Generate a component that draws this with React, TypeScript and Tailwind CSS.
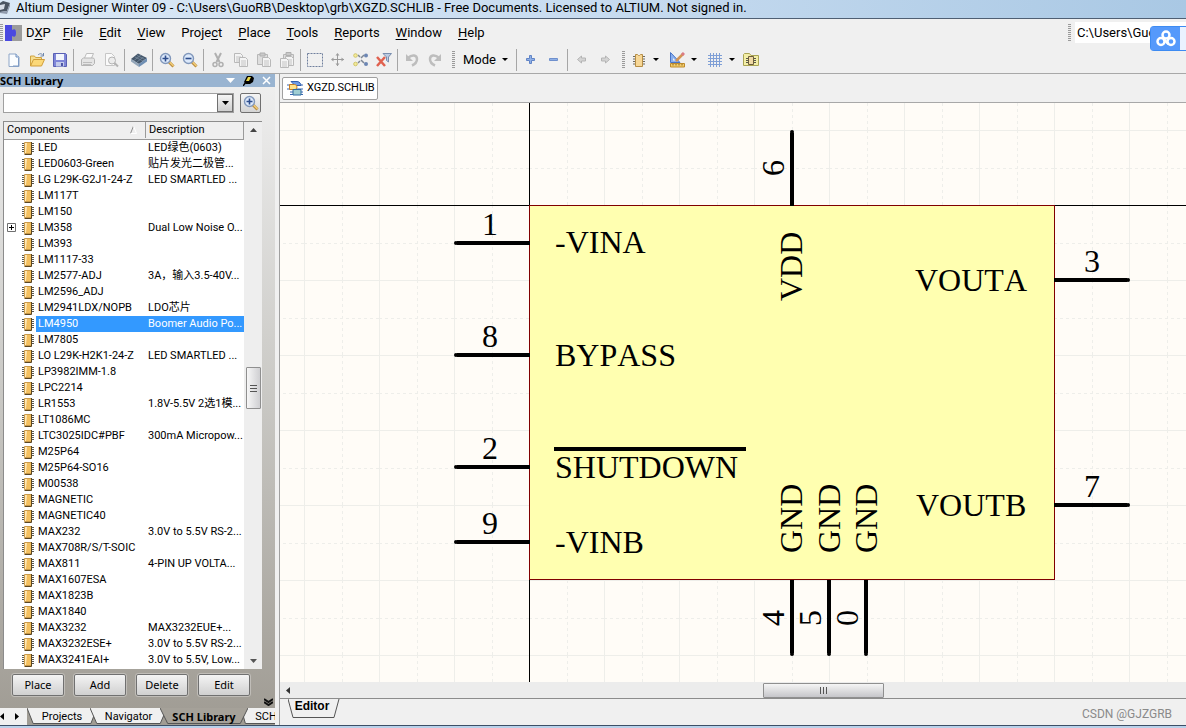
import { Fragment, useState } from 'react';
import type { ReactNode } from 'react';

type Component = { name: string; description?: string; expandable?: boolean };

const COMPONENTS: Component[] = [
  { name: 'LED', description: 'LED绿色(0603)' },
  { name: 'LED0603-Green', description: '贴片发光二极管...' },
  { name: 'LG L29K-G2J1-24-Z', description: 'LED SMARTLED ...' },
  { name: 'LM117T' },
  { name: 'LM150' },
  { name: 'LM358', description: 'Dual Low Noise O...', expandable: true },
  { name: 'LM393' },
  { name: 'LM1117-33' },
  { name: 'LM2577-ADJ', description: '3A，输入3.5-40V...' },
  { name: 'LM2596_ADJ' },
  { name: 'LM2941LDX/NOPB', description: 'LDO芯片' },
  { name: 'LM4950', description: 'Boomer Audio Po...' },
  { name: 'LM7805' },
  { name: 'LO L29K-H2K1-24-Z', description: 'LED SMARTLED ...' },
  { name: 'LP3982IMM-1.8' },
  { name: 'LPC2214' },
  { name: 'LR1553', description: '1.8V-5.5V 2选1模...' },
  { name: 'LT1086MC' },
  { name: 'LTC3025IDC#PBF', description: '300mA Micropow...' },
  { name: 'M25P64' },
  { name: 'M25P64-SO16' },
  { name: 'M00538' },
  { name: 'MAGNETIC' },
  { name: 'MAGNETIC40' },
  { name: 'MAX232', description: '3.0V to 5.5V RS-2...' },
  { name: 'MAX708R/S/T-SOIC' },
  { name: 'MAX811', description: '4-PIN UP VOLTA...' },
  { name: 'MAX1607ESA' },
  { name: 'MAX1823B' },
  { name: 'MAX1840' },
  { name: 'MAX3232', description: 'MAX3232EUE+...' },
  { name: 'MAX3232ESE+', description: '3.0V to 5.5V RS-2...' },
  { name: 'MAX3241EAI+', description: '3.0V to 5.5V, Low...' },
];

// label split around its mnemonic letter
const MENUS = [
  ['D', 'X', 'P'],
  ['', 'F', 'ile'],
  ['', 'E', 'dit'],
  ['', 'V', 'iew'],
  ['Proje', 'c', 't'],
  ['', 'P', 'lace'],
  ['', 'T', 'ools'],
  ['', 'R', 'eports'],
  ['', 'W', 'indow'],
  ['', 'H', 'elp'],
];

function Svg({ children, size = 16 }: { children: ReactNode; size?: number }) {
  return (
    <svg width={size} height={size} viewBox="0 0 16 16" fill="none" aria-hidden="true" className="shrink-0">
      {children}
    </svg>
  );
}

const Magnifier = ({ plus }: { plus?: boolean }) => (
  <Svg>
    <path d="M10 10l4.5 4.5" stroke="#b98a3c" strokeWidth="3" />
    <path d="M10.5 10l4 4" stroke="#f3cf7a" strokeWidth="1.4" />
    <circle cx="6.5" cy="6.5" r="5" fill="#dce9fb" stroke="#8298bb" strokeWidth="1.4" />
    <path d={plus ? 'M3.5 6.5h6M6.5 3.5v6' : 'M3.5 6.5h6'} stroke="#2d4d8c" strokeWidth="1.6" />
  </Svg>
);

const Page = ({ x, y }: { x: number; y: number }) => (
  <g transform={`translate(${x} ${y})`}>
    <path d="M.5.5h6l2 2v7h-8z" fill="#f4f4f4" stroke="#b9b9b9" />
    <path d="M2 4h5M2 6h5M2 8h5" stroke="#c4c4c4" />
  </g>
);

const ICONS: Record<string, ReactNode> = {
  'New': (
    <Svg>
      <path d="M3 2h7l3 3v9.5H3z" fill="#fbfdff" stroke="#8ea6c8" />
      <path d="M10 2v3h3" fill="#dbe6f6" stroke="#6f8fbd" />
      <path d="M12.5 6v8H7" stroke="#7f9cc6" />
    </Svg>
  ),
  'Open': (
    <Svg>
      <path d="M1.5 14V4h4l1 1.500h6v2.500" fill="#f6dd8f" stroke="#d0a441" />
      <path d="M1.500 14l3-6.500h11l-3 6.500z" fill="#fbd878" stroke="#d09d39" />
      <path d="M9 3c2-2 4-1.500 5 .5M14.500 1v3h-3" stroke="#6e87ad" />
    </Svg>
  ),
  'Save': (
    <Svg>
      <path d="M1.500 1.500h12l1 1v12h-13z" fill="#7f86d8" stroke="#5960b4" />
      <path d="M4 2h8v6H4z" fill="#f2f5fc" />
      <path d="M4 10h8v4.500H4z" fill="#c3cbea" />
      <path d="M9 11h2v3H9z" fill="#4c55a5" />
    </Svg>
  ),
  'Print': (
    <Svg>
      <path d="M4.500 6l2-4.500h7L11.500 6" fill="#fafafa" stroke="#bdbdbd" />
      <path d="M1.500 7.500l2-1.500h10l1 1.500v4l-2 2h-11z" fill="#e4e4e4" stroke="#b4b4b4" />
      <path d="M3 10.500h9M3 12.500h8" stroke="#bcbcbc" />
    </Svg>
  ),
  'Print Preview': (
    <Svg>
      <path d="M2.500 1.500h6l3 3v9h-9z" fill="#fafafa" stroke="#c6c6c6" />
      <circle cx="9" cy="8.500" r="3.500" fill="#ececec" stroke="#b4b4b4" />
      <path d="M11.500 11l3.500 3.500" stroke="#b4b4b4" strokeWidth="2" />
    </Svg>
  ),
  'Devices': (
    <Svg>
      <path d="M0 7l7-5.500 9 4.500-8 6z" fill="#44566a" />
      <path d="M0 7l8 5v3L0 9.500z" fill="#93a6b9" />
      <path d="M16 6l-8 6v3l8-5.500z" fill="#6f8fb4" />
      <path d="M4 5l8 4M6 3.500l8 4M3 8.500l7-5.500M6 10l7-5.500" stroke="#75899c" strokeWidth=".8" />
    </Svg>
  ),
  'Zoom In': <Magnifier plus />,
  'Zoom Out': <Magnifier />,
  'Cut': (
    <Svg>
      <path d="M5 1l4.500 9M11 1L6.500 10" stroke="#b0b0b0" strokeWidth="2" />
      <circle cx="5" cy="12.500" r="2" stroke="#b0b0b0" strokeWidth="1.500" />
      <circle cx="11" cy="12.500" r="2" stroke="#b0b0b0" strokeWidth="1.500" />
    </Svg>
  ),
  'Copy': (
    <Svg>
      <Page x={1} y={1} />
      <Page x={6} y={5} />
    </Svg>
  ),
  'Paste': (
    <Svg>
      <path d="M1.500 2.500h10v10h-10z" fill="#dedede" stroke="#b7b7b7" />
      <path d="M4 1h5v3H4z" fill="#c9c9c9" stroke="#b0b0b0" />
      <Page x={6} y={5} />
    </Svg>
  ),
  'Rubber Stamp': (
    <Svg>
      <path d="M4.500 2.500h10v10h-10z" fill="#dedede" stroke="#b7b7b7" />
      <path d="M7 .5h5v3H7z" fill="#c9c9c9" stroke="#b0b0b0" />
      <Page x={6} y={4} />
      <Page x={1} y={6} />
    </Svg>
  ),
  'Select Inside Area': (
    <Svg>
      <path d="M.5 1.500h15v13H.5z" stroke="#6f7f9d" strokeDasharray="2 1" />
    </Svg>
  ),
  'Move Selection': (
    <Svg>
      <path d="M7.500 2v12M2 7.500h12" stroke="#9c9c9c" />
      <path d="M7.500 1L5.500 3.500h4zM7.500 14l-2-2.500h4zM1 7.500l2.500-2v4zM14 7.500l-2.500-2v4z" fill="#9c9c9c" />
    </Svg>
  ),
  'Deselect All': (
    <Svg>
      <path d="M5 3l2 2M8 6l3-3M8 8l3 3M5 11l2-2" stroke="#7d8694" strokeWidth="1.500" />
      <circle cx="2.500" cy="3.500" r="1.800" fill="#f5eb9a" stroke="#d0c66b" />
      <circle cx="2.500" cy="12" r="1.800" fill="#f5eb9a" stroke="#d0c66b" />
      <circle cx="13" cy="3.500" r="2" fill="#6c86b3" />
      <circle cx="13" cy="12" r="2" fill="#6c86b3" />
    </Svg>
  ),
  'Clear Filter': (
    <Svg>
      <path d="M7 1.500h8.500L12.500 5v5l-2-1.500V5z" fill="#bccbe2" stroke="#7a8eaf" />
      <path d="M1 5l8 9M9 5l-8 9" stroke="#e0614f" strokeWidth="2.500" />
    </Svg>
  ),
  'Undo': (
    <Svg>
      <path d="M4 6c4-4 9-3 9 1 0 3-1.500 5-5 6.500" stroke="#bdbdbd" strokeWidth="2.500" />
      <path d="M2 2v7h7z" fill="#bdbdbd" />
    </Svg>
  ),
  'Redo': (
    <Svg>
      <path d="M12 6C8 2 3 3 3 7c0 3 1.500 5 5 6.500" stroke="#bdbdbd" strokeWidth="2.500" />
      <path d="M14 2v7H7z" fill="#bdbdbd" />
    </Svg>
  ),
  'Add Mode': (
    <Svg>
      <path d="M6.500 3.500h2v3h3v2h-3v3h-2v-3h-3v-2h3z" fill="#8fb0e6" stroke="#6184c6" />
    </Svg>
  ),
  'Remove Mode': (
    <Svg>
      <path d="M3.500 6.500h8v2h-8z" fill="#8fb0e6" stroke="#6f90cd" />
    </Svg>
  ),
  'Previous Mode': (
    <Svg>
      <path d="M3.500 7.500l4-3.500v2h4v3h-4v2z" fill="#d4d4d4" stroke="#b4b4b4" />
    </Svg>
  ),
  'Next Mode': (
    <Svg>
      <path d="M12.500 7.500l-4-3.500v2h-4v3h4v2z" fill="#d4d4d4" stroke="#b4b4b4" />
    </Svg>
  ),
  'IEEE Symbols': (
    <Svg>
      <path d="M2 4.500h12M2 7h12M2 9.500h12M2 12h12" stroke="#6d6a60" />
      <path d="M4.500 2.500h2l1 1h1l1-1h2v12h-7z" fill="#f7d796" stroke="#b58d45" />
    </Svg>
  ),
  'Utilities': (
    <Svg>
      <path d="M1.500.5v10H11z" fill="#8ab0ef" stroke="#4974c6" />
      <path d="M4 6v2.500h2.500z" fill="#f0f0f0" />
      <path d="M7 9l7-7" stroke="#d49555" strokeWidth="2.500" />
      <path d="M13 3l2-2" stroke="#db7b85" strokeWidth="3" />
      <path d="M1.500 11.500h14v3.500h-14z" fill="#f4cd6b" stroke="#bd8a2d" />
      <path d="M4 12v1.500M7 12v1.500M10 12v1.500M13 12v1.500" stroke="#8d6820" />
    </Svg>
  ),
  'Grids': (
    <Svg>
      <path d="M1 3.500h14M1 6.500h14M1 9.500h14M1 12.500h14M3.500 1v14M6.500 1v14M9.500 1v14M12.500 1v14" stroke="#7f9fd6" />
    </Svg>
  ),
  'Model Manager': (
    <Svg>
      <path d="M.5 13.500v-11l1-1h5l1.500 2h7.500v10z" fill="#f3eea6" stroke="#aaa455" />
      <path d="M3 6.500h10M3 8.500h10M3 10.500h10" stroke="#59574d" />
      <path d="M5.500 4.500h5v8h-5z" fill="#f0d9a4" stroke="#6c5e39" />
    </Svg>
  ),
};

const Separator = () => <span className="mx-0.5 h-[22px] w-px shrink-0 bg-[#a6a6a6]" />;

const Grip = () => (
  <span className="h-[18px] w-[3px] shrink-0 bg-[repeating-linear-gradient(to_bottom,#9a9a9a_0_1px,#efefef_1px_2px)]" />
);

const Caret = () => (
  <svg width="6" height="3" viewBox="0 0 6 3" aria-hidden="true">
    <path d="M0 0h6L3 3z" fill="#000" />
  </svg>
);

function IconButton({ name }: { name: string }) {
  return (
    <button type="button" aria-label={name} className="flex h-[22px] w-[23px] shrink-0 items-center justify-center">
      {ICONS[name]}
    </button>
  );
}

const TOOL_GROUPS = [
  ['New', 'Open', 'Save'],
  ['Print', 'Print Preview'],
  ['Devices'],
  ['Zoom In', 'Zoom Out'],
  ['Cut', 'Copy', 'Paste', 'Rubber Stamp'],
  ['Select Inside Area', 'Move Selection', 'Deselect All', 'Clear Filter'],
  ['Undo', 'Redo'],
];

function Toolbar() {
  return (
    <div className="flex h-[27px] shrink-0 items-center overflow-hidden pl-0.5">
      {TOOL_GROUPS.map((group, i) => (
        <Fragment key={group[0]}>
          {i > 0 && <Separator />}
          {group.map((name) => (
            <IconButton key={name} name={name} />
          ))}
        </Fragment>
      ))}
      <div className="flex items-center pl-1.5">
        <Grip />
        <button type="button" className="flex items-center gap-1.5 pr-1.5 pl-2 text-[13px]">
          Mode
          <Caret />
        </button>
        <Separator />
        <IconButton name="Add Mode" />
        <IconButton name="Remove Mode" />
        <Separator />
        <IconButton name="Previous Mode" />
        <IconButton name="Next Mode" />
      </div>
      <div className="flex items-center pl-1.5">
        <Grip />
        {['IEEE Symbols', 'Utilities', 'Grids'].map((name) => (
          <div key={name} className="flex w-[38px] items-center gap-[3px] pl-0.5">
            <IconButton name={name} />
            <Caret />
          </div>
        ))}
        <IconButton name="Model Manager" />
      </div>
    </div>
  );
}

function MenuBar() {
  return (
    <div className="flex h-[27px] shrink-0 items-center text-[13px]">
      <Grip />
      <svg width="17" height="16" viewBox="0 0 17 16" className="ml-0.5 shrink-0" aria-hidden="true">
        <path d="M0 0h17v16H0z" fill="#9b9b9b" />
        <path d="M0 0h7v5c3-2 4 0 4 3s-1 5-4 3v5H0z" fill="#4a49e0" />
      </svg>
      <nav className="flex gap-4 pl-1">
        {MENUS.map(([before, key, after]) => (
          <button key={before + key + after} type="button" className="first:-mr-1">
            {before}
            <span className="underline underline-offset-2">{key}</span>
            {after}
          </button>
        ))}
      </nav>
      <div className="ml-auto flex items-center gap-1">
        <Grip />
        <div className="relative w-[111px]">
          <input
            aria-label="Location"
            defaultValue="C:\Users\GuoRB\Desktop\grb"
            className="block h-[21px] w-full bg-white pl-0.5 text-[13px] outline-none"
          />
          <button
            type="button"
            aria-label="Upload"
            className="absolute top-1 right-0 flex h-[25px] w-9 items-center rounded-l-[4px] border border-r-0 border-[#3d8bf2] bg-[#eaf2ff]"
          >
            <span className="flex h-full w-[29px] items-center justify-center bg-[#5599fb]">
              <svg width="20" height="17" viewBox="0 0 20 17" fill="none" stroke="#fff" strokeWidth="2.500" aria-hidden="true">
                <circle cx="10" cy="5" r="3.500" />
                <circle cx="5" cy="11.500" r="3.500" />
                <circle cx="15" cy="11.500" r="3.500" />
                <path d="M7.500 9l5 5" />
              </svg>
            </span>
          </button>
        </div>
      </div>
    </div>
  );
}

const ChipIcon = () => (
  <svg width="12" height="14" viewBox="0 0 12 14" className="block" aria-hidden="true">
    <path d="M0 2.500h12M0 4.500h12M0 6.500h12M0 8.500h12M0 10.500h12" stroke="#5c5a52" />
    <path d="M2.500 1.500h7v11h-7z" fill="#ffe9b8" stroke="#c99a4a" />
    <path d="M5 2h4v10H4z" fill="#f3bf5e" />
    <path d="M9.500 1v12.500h-7" stroke="#5c4620" fill="none" />
  </svg>
);

function ComponentList() {
  const [selected, setSelected] = useState('LM4950');

  return (
    <div className="mt-2 mr-[13px] ml-[3px] flex min-h-0 flex-1 overflow-hidden border-t border-l border-[#8c8c8c] bg-white">
      <table className="w-full table-fixed border-collapse self-start text-[11px] leading-4 whitespace-nowrap">
        <thead>
          <tr className="h-[17px] border-r border-b border-[#9a9a9a] bg-[#efefef] text-left">
            <th className="w-[142px] p-0 pl-[3px] font-normal">
              <span className="flex items-center justify-between border-r border-[#9a9a9a] pr-2">
                Components
                <svg width="7" height="8" viewBox="0 0 7 8" aria-hidden="true">
                  <path d="M.5 7.500L3.500 0" stroke="#8c8c8c" />
                  <path d="M3.500 0l3 7.500h-6" stroke="#fff" fill="none" />
                </svg>
              </span>
            </th>
            <th className="p-0 pl-[3px] font-normal">Description</th>
          </tr>
        </thead>
        <tbody>
          {COMPONENTS.map((c) => (
            <tr key={c.name} onClick={() => setSelected(c.name)} className="h-4">
              <td className="p-0">
                <div className="flex h-4 items-center">
                  <span className="flex w-[18px] pl-[3px]">
                    {c.expandable && (
                      <button type="button" aria-label={`Expand ${c.name}`}>
                        <svg width="9" height="9" viewBox="0 0 9 9" className="block" aria-hidden="true">
                          <path d="M.5.5h8v8h-8z" fill="#fff" stroke="#6f6f6f" />
                          <path d="M2 4.500h5M4.500 2v5" stroke="#000" />
                        </svg>
                      </button>
                    )}
                  </span>
                  <ChipIcon />
                  <span
                    className={
                      c.name === selected
                        ? 'ml-0.5 h-4 flex-1 bg-[#3399ff] pl-0.5 text-white'
                        : 'ml-0.5 h-4 flex-1 pl-0.5'
                    }
                  >
                    {c.name}
                  </span>
                </div>
              </td>
              <td className={c.name === selected ? 'bg-[#3399ff] p-0 pl-0.5 text-white' : 'p-0 pl-0.5'}>
                <div className="h-4">{c.description}</div>
              </td>
            </tr>
          ))}
        </tbody>
      </table>
      <div className="flex w-[18px] shrink-0 flex-col items-center bg-[#eeeeee] py-1.5">
        <svg width="7" height="4" viewBox="0 0 7 4" aria-hidden="true">
          <path d="M0 4h7L3.500 0z" fill="#444" />
        </svg>
        <div className="grow-[48]" />
        <div className="flex h-[42px] w-[15px] flex-col items-center justify-center gap-0.5 rounded-[1px] border border-[#8f8f8f] bg-linear-to-r from-[#f7f7f7] to-[#cfcfd2]">
          <span className="h-px w-[7px] bg-[#555]" />
          <span className="h-px w-[7px] bg-[#555]" />
          <span className="h-px w-[7px] bg-[#555]" />
        </div>
        <div className="grow-[51]" />
        <svg width="7" height="4" viewBox="0 0 7 4" aria-hidden="true">
          <path d="M0 0h7L3.500 4z" fill="#555" />
        </svg>
      </div>
    </div>
  );
}

function PanelTab({ label, width, active }: { label: string; width: string; active?: boolean }) {
  return (
    <button
      type="button"
      className={`relative -mr-[7px] h-[17px] shrink-0 ${width} ${active ? "z-10 font-['Noto_Sans',sans-serif] font-bold" : ''}`}
    >
      <svg viewBox="0 0 80 17" preserveAspectRatio="none" className="absolute inset-0 h-full w-full" aria-hidden="true">
        <path
          d="M0 0l7 15.500h66L80 0"
          fill={active ? '#a5a199' : '#f0f0f0'}
          stroke="#555"
          vectorEffect="non-scaling-stroke"
        />
      </svg>
      <span className="relative block leading-[15px] whitespace-nowrap">{label}</span>
    </button>
  );
}

function LibraryPanel() {
  return (
    <aside className="flex w-[275px] shrink-0 flex-col bg-linear-to-b from-[#f0f0f0] via-[#c9c8c4] to-[#9f9b93]">
      <header className="flex h-[13px] shrink-0 items-center bg-[#99b4d1] pr-1">
        <h2 className="font-['Noto_Sans',sans-serif] text-[11px] leading-[13px] font-bold">SCH Library</h2>
        <div className="ml-auto flex items-center gap-2">
          <button type="button" aria-label="Panel menu">
            <svg width="9" height="5" viewBox="0 0 9 5" aria-hidden="true">
              <path d="M0 0h9L4.500 5z" fill="#fff" />
            </svg>
          </button>
          <button type="button" aria-label="Pin panel">
            <svg width="11" height="11" viewBox="0 0 11 11" aria-hidden="true">
              <path d="M4 1h5l2 2-1 4-3 2H3L1 7z" fill="#000" />
              <path d="M5 2h3l-2 4H3z" fill="#e8d84a" />
              <path d="M3 7l-3 4" stroke="#000" strokeWidth="1.500" />
            </svg>
          </button>
          <button type="button" aria-label="Close panel">
            <svg width="9" height="9" viewBox="0 0 9 9" aria-hidden="true">
              <path d="M1 1l7 7M8 1L1 8" stroke="#fff" strokeWidth="1.500" />
            </svg>
          </button>
        </div>
      </header>

      <div className="mt-1.5 mr-3.5 ml-[3px] flex h-5 shrink-0 gap-1.5">
        <div className="flex min-w-0 flex-1 border border-[#a0a0a0] bg-white">
          <input aria-label="Filter components" className="min-w-0 flex-1 px-1 text-[11px] outline-none" />
          <button
            type="button"
            aria-label="Show filters"
            className="flex w-4 items-center justify-center border border-[#707070] bg-linear-to-b from-[#f5f5f5] to-[#cfcfcf]"
          >
            <svg width="7" height="4" viewBox="0 0 7 4" aria-hidden="true">
              <path d="M0 0h7L3.500 4z" fill="#000" />
            </svg>
          </button>
        </div>
        <button
          type="button"
          aria-label="Find component"
          className="flex w-[21px] items-center justify-center rounded-[2px] border border-[#707070] bg-linear-to-b from-[#f5f5f5] to-[#d4d4d4]"
        >
          <Magnifier plus />
        </button>
      </div>

      <ComponentList />

      <div className="mt-[5px] flex shrink-0 gap-2.5 pl-3">
        {['Place', 'Add', 'Delete', 'Edit'].map((label) => (
          <button
            key={label}
            type="button"
            className="h-[22px] w-[52px] rounded-[2px] border border-[#707070] bg-linear-to-b from-[#f4f4f4] to-[#d0d0d0] font-['Noto_Sans',sans-serif] text-[11px] leading-4 outline outline-[#c0bdb8]"
          >
            {label}
          </button>
        ))}
      </div>

      <div className="flex h-3 shrink-0 items-end justify-end pr-0.5 pb-0.5">
        <svg width="9" height="8" viewBox="0 0 9 8" fill="none" stroke="#111" strokeWidth="2" aria-hidden="true">
          <path d="M0 1l4.500 3L9 1M0 4l4.500 3L9 4" />
        </svg>
      </div>

      <nav className="flex h-[17px] shrink-0 overflow-hidden text-[11px]">
        <div className="flex w-[27px] shrink-0 items-center justify-between bg-[#f0f0f0] pr-2">
          <button type="button" aria-label="Scroll tabs left">
            <svg width="4" height="7" viewBox="0 0 4 7" className="block" aria-hidden="true">
              <path d="M4 0v7L0 3.500z" fill="#000" />
            </svg>
          </button>
          <button type="button" aria-label="Scroll tabs right">
            <svg width="4" height="7" viewBox="0 0 4 7" className="block" aria-hidden="true">
              <path d="M0 0v7l4-3.500z" fill="#000" />
            </svg>
          </button>
        </div>
        <PanelTab label="Projects" width="w-[70px]" />
        <PanelTab label="Navigator" width="w-[77px]" />
        <PanelTab label="SCH Library" width="w-[88px]" active />
        <PanelTab label="SCH" width="w-[50px]" />
      </nav>
    </aside>
  );
}

type Pin = { number: string; x: number; y: number; dx: number; dy: number };

// x/y is where the pin meets the symbol body
const PINS: Pin[] = [
  { number: '1', x: 250, y: 140, dx: -1, dy: 0 },
  { number: '8', x: 250, y: 252, dx: -1, dy: 0 },
  { number: '2', x: 250, y: 364, dx: -1, dy: 0 },
  { number: '9', x: 250, y: 439, dx: -1, dy: 0 },
  { number: '3', x: 774, y: 177, dx: 1, dy: 0 },
  { number: '7', x: 774, y: 402, dx: 1, dy: 0 },
  { number: '6', x: 512, y: 103, dx: 0, dy: -1 },
  { number: '4', x: 512, y: 477, dx: 0, dy: 1 },
  { number: '5', x: 549, y: 477, dx: 0, dy: 1 },
  { number: '0', x: 586, y: 477, dx: 0, dy: 1 },
];

const NAMES = [
  { text: '-VINA', x: 275, y: 150 },
  { text: 'BYPASS', x: 275, y: 263 },
  { text: 'SHUTDOWN', x: 275, y: 375 },
  { text: '-VINB', x: 275, y: 450 },
  { text: 'VOUTA', x: 635, y: 188 },
  { text: 'VOUTB', x: 636, y: 413 },
];

const VERTICAL_NAMES = [
  { text: 'VDD', x: 522, y: 198 },
  { text: 'GND', x: 522, y: 450 },
  { text: 'GND', x: 560, y: 450 },
  { text: 'GND', x: 597, y: 450 },
];

function PinShape({ number, x, y, dx, dy }: Pin) {
  const cx = dx ? x - 1 + dx * 39 : x - 8;
  const cy = dx ? y - 8 : y + dy * 38;
  return (
    <g>
      <path d={`M${x} ${y}l${dx * 73} ${dy * 73}`} stroke="#000" strokeWidth="4" />
      <circle cx={x + dx * 74} cy={y + dy * 74} r="2" />
      <text x={cx} y={cy} textAnchor="middle" transform={dx ? undefined : `rotate(-90 ${cx} ${cy})`}>
        {number}
      </text>
    </g>
  );
}

function SchematicCanvas() {
  return (
    <div className="min-h-0 flex-1 overflow-hidden bg-[#fffcf7]">
      <svg width="100%" height="100%" className="block font-['Liberation_Serif',serif] text-[32px] [font-kerning:none]">
        <defs>
          <pattern id="grid" x="24" y="27" width="75" height="75" patternUnits="userSpaceOnUse">
            <path d="M0 .5h75M.5 0v75" stroke="#eeeeea" />
            <path d="M0 38.500h75M38.500 0v75" stroke="#eeeeea" strokeDasharray="3 3" />
          </pattern>
        </defs>
        <rect width="100%" height="100%" fill="url(#grid)" />
        <rect x="249" width="1" height="100%" />
        <rect y="102" width="100%" height="1" />
        <rect x="249.500" y="102.500" width="525" height="374" fill="#ffffb0" stroke="#800000" />
        {PINS.map((pin) => (
          <PinShape key={pin.number} {...pin} />
        ))}
        {NAMES.map((n) => (
          <text key={n.text} x={n.x} y={n.y}>
            {n.text}
          </text>
        ))}
        {VERTICAL_NAMES.map((n) => (
          <text key={n.x + n.text} x={n.x} y={n.y} transform={`rotate(-90 ${n.x} ${n.y})`}>
            {n.text}
          </text>
        ))}
        {/* active-low bar */}
        <path d="M274 346h192" stroke="#000" strokeWidth="4" />
      </svg>
    </div>
  );
}

function EditorArea() {
  return (
    <main className="flex min-w-0 flex-1 flex-col border-l border-[#a0a0a0]">
      <div className="flex h-[29px] shrink-0 items-center border-b border-[#a8a8a8] pl-0.5">
        <button
          type="button"
          className="flex h-[23px] items-center gap-1 rounded-[2px] border border-[#a0a0a0] bg-white pr-0.5 pl-1 text-[11px]"
        >
          <Svg>
            <path d="M0 5h16M0 9h16M3 12h13M3 14.500h13" stroke="#3a68b5" />
            <path d="M4 1.500h6c3 0 4 3 4 4H8z" fill="#6f9be4" stroke="#315fae" />
            <path d="M2.500 4.500h5c3 0 3.500 5 0 5h-5z" fill="#ffe38a" stroke="#c77d22" />
            <path d="M6 9.500h8v5.500H6z" fill="#9fcdd2" stroke="#2f6aa0" />
          </Svg>
          XGZD.SCHLIB
        </button>
      </div>

      <SchematicCanvas />

      <div className="flex h-[17px] shrink-0 items-center border-b border-[#8c8c8c] bg-[#ececec] pl-1.5">
        <svg width="4" height="7" viewBox="0 0 4 7" aria-hidden="true">
          <path d="M4 0v7L0 3.500z" fill="#333" />
        </svg>
        <div className="grow-[61]" />
        <div className="flex h-[15px] w-[121px] items-center justify-center gap-0.5 rounded-[1px] border border-[#8f8f8f] bg-linear-to-b from-[#f5f5f5] to-[#c6c6ca]">
          <span className="h-[7px] w-px bg-[#555]" />
          <span className="h-[7px] w-px bg-[#555]" />
          <span className="h-[7px] w-px bg-[#555]" />
        </div>
        <div className="grow-[39]" />
      </div>

      <div className="flex h-[26px] shrink-0 items-start justify-between pr-3.5 pl-2">
        <button
          type="button"
          className="relative h-[19px] w-[52px] pr-1 pb-1 font-['Liberation_Sans',sans-serif] text-[12px] font-bold"
        >
          <svg viewBox="0 0 52 19" className="absolute inset-0 h-full w-full" aria-hidden="true">
            <path d="M0 0l5 18.500h41L51 0" fill="#f0f0f0" stroke="#555" />
          </svg>
          <span className="relative block leading-[15px]">Editor</span>
        </button>
        <span className="pt-[7px] text-[12px] leading-4 text-[#8a8a8a]">CSDN @GJZGRB</span>
      </div>
    </main>
  );
}

export default function App() {
  return (
    <div className="flex h-screen flex-col overflow-hidden bg-[#f0f0f0] font-['Roboto','Noto_Sans_CJK_SC',sans-serif] text-black">
      <div className="flex h-[19px] shrink-0 items-center gap-1.5 overflow-hidden border-b border-[#4f5f73] bg-linear-to-r from-[#dbe9f7] via-[#c8dcf0] to-[#a9c8e4] text-[13px] leading-4 whitespace-nowrap">
        <svg width="10" height="14" viewBox="0 0 10 14" className="mb-1 shrink-0" aria-hidden="true">
          <path d="M0 3l3-2 7 2-3 8-7 1z" fill="#4b5563" />
          <path d="M0 5l5-1-1 5-4 1z" fill="#d8dee8" />
          <path d="M7 11l3-8v3l-3 8-7-1v-1z" fill="#8f9aac" />
        </svg>
        <h1 className="-mt-0.5">
          Altium Designer Winter 09 - C:\Users\GuoRB\Desktop\grb\XGZD.SCHLIB - Free Documents. Licensed to ALTIUM. Not signed in.
        </h1>
      </div>
      <MenuBar />
      <Toolbar />
      <div className="flex min-h-0 flex-1 gap-1 border-t border-[#a8a8a8]">
        <LibraryPanel />
        <EditorArea />
      </div>
      <div className="h-[3px] shrink-0 border-t border-[#3c4f66] bg-[#b9d1ea]" />
    </div>
  );
}
